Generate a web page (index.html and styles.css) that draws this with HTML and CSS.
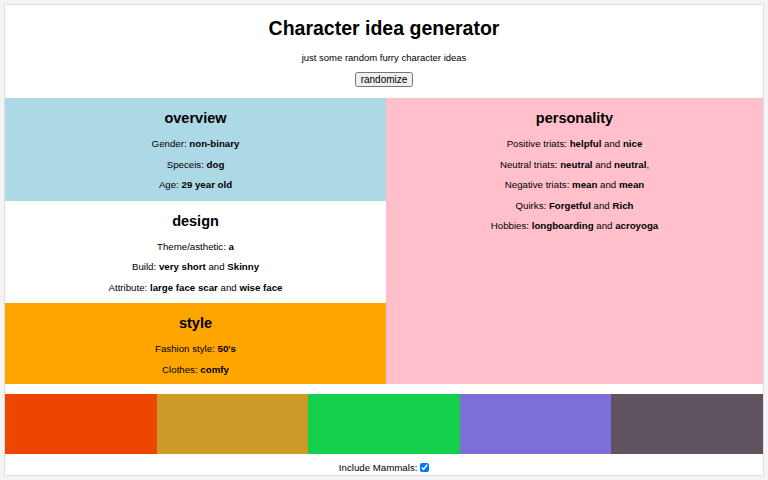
FILE: index.html
```html
<!DOCTYPE html>
<html lang="en">
<head>
  <meta charset="UTF-8">
  <meta name="viewport" content="width=device-width, initial-scale=1.0">
  <title>Character idea generator</title>
  <link rel="stylesheet" href="styles.css">
</head>
<body>
<div class="container">
  <div class="header">
    <h1>Character idea generator</h1>
    <p class="sub">just some random furry character ideas</p>
    <button>randomize</button>
  </div>

  <div class="columns">
    <div class="left">
      <div class="section overview">
        <h3>overview</h3>
        <p>Gender: <b>non-binary</b></p>
        <p>Speceis: <b>dog</b></p>
        <p>Age: <b>29 year old</b></p>
      </div>
      <div class="section design">
        <h3>design</h3>
        <p>Theme/asthetic: <b>a</b></p>
        <p>Build: <b>very short</b> and <b>Skinny</b></p>
        <p>Attribute: <b>large face scar</b> and <b>wise face</b></p>
      </div>
      <div class="section style">
        <h3>style</h3>
        <p>Fashion style: <b>50's</b></p>
        <p>Clothes: <b>comfy</b></p>
      </div>
    </div>
    <div class="section personality">
      <h3>personality</h3>
      <p>Positive triats: <b>helpful</b> and <b>nice</b></p>
      <p>Neutral triats: <b>neutral</b> and <b>neutral</b>,</p>
      <p>Negative triats: <b>mean</b> and <b>mean</b></p>
      <p>Quirks: <b>Forgetful</b> and <b>Rich</b></p>
      <p>Hobbies: <b>longboarding</b> and <b>acroyoga</b></p>
    </div>
  </div>

  <div class="palette">
    <div class="swatch" style="background:#ec4600"></div>
    <div class="swatch" style="background:#cb9a27"></div>
    <div class="swatch" style="background:#13cf4b"></div>
    <div class="swatch" style="background:#7b70d6"></div>
    <div class="swatch" style="background:#5e535e"></div>
  </div>

  <div class="options">
    <label>Include Mammals: <input type="checkbox" checked></label>
  </div>
</div>
</body>
</html>
```

FILE: styles.css
```css
body {
  font-family: "Liberation Sans", Arial, sans-serif;
  background: #f4f4f4;
  margin: 0;
  padding: 4px;
}
.container {
  background: #ffffff;
  border: 1px solid #dddddd;
}
.header {
  text-align: center;
  font-size: 10px;
  padding: 11px 0 11px;
}
h1 {
  font-size: 19.5px;
  line-height: 24px;
  margin: 0 0 11px;
}
.sub {
  font-size: 9.5px;
  line-height: 14px;
  margin: 0 0 7px;
}
button {
  display: block;
  margin: 0 auto;
  font-family: "Liberation Sans", Arial, sans-serif;
  font-size: 10px;
  height: 15px;
  padding: 0 4px;
  line-height: 11px;
}
.columns {
  display: grid;
  grid-template-columns: 381px 1fr;
}
.section {
  text-align: center;
  padding: 10px 0 5px;
}
.personality {
  background: #ffc0cb;
}
.overview {
  background: #add8e6;
}
.design {
  background: #ffffff;
}
.style {
  background: #ffa500;
  padding-bottom: 4px;
}
h3 {
  font-size: 14.5px;
  line-height: 20px;
  margin: 0 0 6px;
}
.section p {
  font-size: 9.7px;
  line-height: 20.5px;
  margin: 0;
}
.palette {
  display: flex;
  height: 60px;
  margin-top: 10px;
}
.swatch {
  flex: 1;
}
.options {
  text-align: center;
  font-size: 9.7px;
  line-height: 14px;
  padding: 7px 0 0;
}
.options input {
  width: 9px;
  height: 9px;
  margin: 0;
  vertical-align: -1px;
}
```
